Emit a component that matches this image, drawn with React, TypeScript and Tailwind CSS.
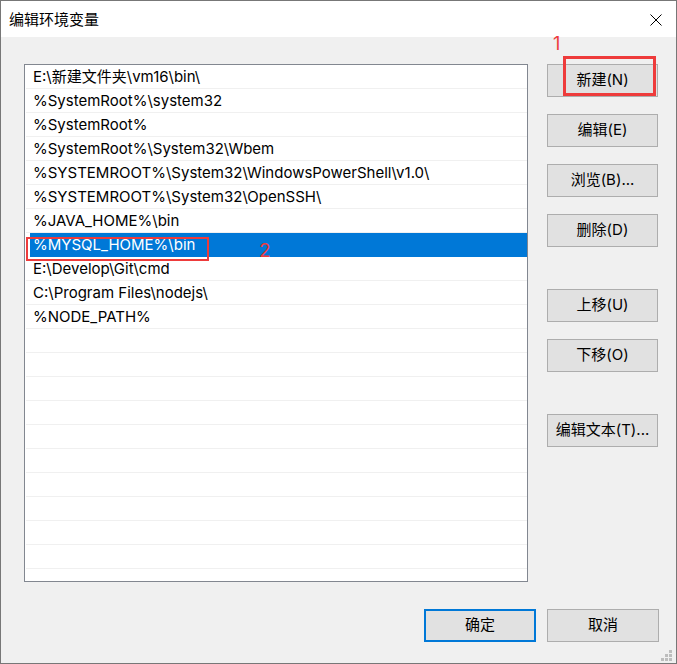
const paths = [
  "E:\\新建文件夹\\vm16\\bin\\",
  "%SystemRoot%\\system32",
  "%SystemRoot%",
  "%SystemRoot%\\System32\\Wbem",
  "%SYSTEMROOT%\\System32\\WindowsPowerShell\\v1.0\\",
  "%SYSTEMROOT%\\System32\\OpenSSH\\",
  "%JAVA_HOME%\\bin",
  "%MYSQL_HOME%\\bin",
  "E:\\Develop\\Git\\cmd",
  "C:\\Program Files\\nodejs\\",
  "%NODE_PATH%",
];

const rows = [...paths, ...Array(11).fill("")];
const selected = 7;

const font = { fontFamily: 'Inter, "Noto Sans CJK SC", sans-serif' };

function Btn({ label, className = "", children }: { label: string; className?: string; children?: React.ReactNode }) {
  return (
    <div
      className={`relative w-[111px] h-[33px] border border-[#adadad] bg-[#e1e1e1] flex items-center justify-center text-[15px] text-black ${className}`}
    >
      {label}
      {children}
    </div>
  );
}

function Grip() {
  const dots = [
    [8, 0],
    [4, 4],
    [8, 4],
    [0, 8],
    [4, 8],
    [8, 8],
  ];
  return (
    <svg className="absolute right-[4px] bottom-[2px]" width="11" height="11" viewBox="0 0 11 11">
      {dots.map(([x, y]) => (
        <rect key={`${x}-${y}`} x={x} y={y} width="3" height="3" fill="#bdbdbd" />
      ))}
    </svg>
  );
}

export default function App() {
  return (
    <div className="w-[677px] h-[664px] border border-[#777777] flex flex-col bg-[#f0f0f0]" style={font}>
      {/* title bar */}
      <div className="h-[36px] bg-white flex items-center justify-between pl-[8px] pr-[14px]">
        <span className="text-[15px] text-black" style={{ fontFamily: '"Noto Sans CJK SC", sans-serif' }}>
          编辑环境变量
        </span>
        <svg width="12" height="12" viewBox="0 0 12 12" className="mt-[1px]">
          <path d="M0.5 0.5 L11.5 11.5 M11.5 0.5 L0.5 11.5" stroke="#000" strokeWidth="1" />
        </svg>
      </div>

      {/* body */}
      <div className="relative flex-1 pt-[27px] pl-[23px]">
        <div className="flex gap-[19px]">
          {/* list */}
          <div className="w-[504px] h-[518px] border border-[#828790] bg-white overflow-hidden">
            <div className="pl-[1px]">
              {rows.map((p, i) => (
                <div
                  key={i}
                  className={`relative h-[24px] ${i === selected ? "" : "border-b border-[#f0f0f0]"}`}
                >
                  {i === selected ? (
                    <>
                      <div className="ml-[4px] h-[24px] bg-[#0078d7] text-white text-[15px] leading-[24px] pl-[3px]">
                        {p}
                      </div>
                      <div className="absolute z-10 left-0 top-[4px] w-[183px] h-[24px] border-2 border-[#ee3b3b]" />
                      <span className="absolute z-10 left-[233px] top-[8px] text-[19px] leading-none text-[#ee3b3b]">
                        2
                      </span>
                    </>
                  ) : (
                    <div className="ml-[4px] pl-[3px] text-[15px] leading-[23px] text-black whitespace-nowrap">{p}</div>
                  )}
                </div>
              ))}
            </div>
          </div>

          {/* side buttons */}
          <div className="flex flex-col">
            <Btn label="新建(N)">
              <div className="absolute z-10 left-[15px] top-[-9px] w-[93px] h-[40px] border-[3px] border-[#ee3b3b]" />
              <span className="absolute z-10 left-[5px] top-[-30px] text-[18px] leading-none text-[#ee3b3b]">
                1
              </span>
            </Btn>
            <Btn label="编辑(E)" className="mt-[17px]" />
            <Btn label="浏览(B)..." className="mt-[17px]" />
            <Btn label="删除(D)" className="mt-[17px]" />
            <Btn label="上移(U)" className="mt-[42px]" />
            <Btn label="下移(O)" className="mt-[17px]" />
            <Btn label="编辑文本(T)..." className="mt-[42px]" />
          </div>
        </div>

        {/* bottom buttons */}
        <div className="flex justify-end gap-[11px] pr-[17px] mt-[27px]">
          <div className="w-[112px] h-[33px] border-2 border-[#0078d7] bg-[#e1e1e1] flex items-center justify-center text-[15px] text-black">
            确定
          </div>
          <Btn label="取消" className="w-[112px]" />
        </div>

        <Grip />
      </div>
    </div>
  );
}
